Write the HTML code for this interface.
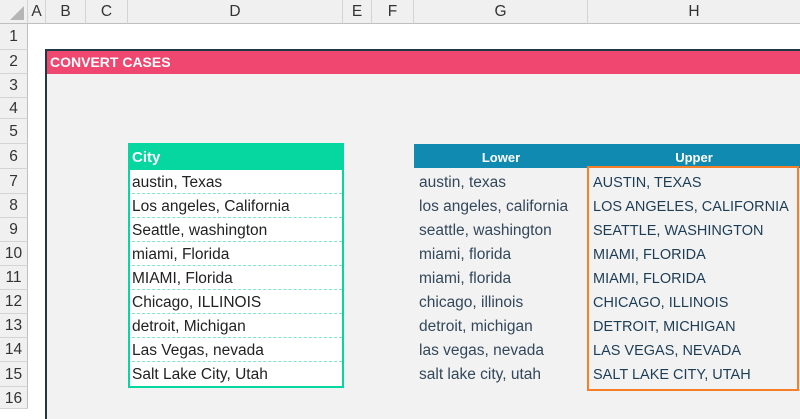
<!DOCTYPE html>
<html><head><style>
*{margin:0;padding:0;box-sizing:border-box}
body{width:800px;height:409px;overflow:hidden;background:#fff;font-family:"Liberation Sans",sans-serif;position:relative}
.a{position:absolute}
.ch{top:0;height:24px;background:#f0f0f0;border-right:1px solid #d4d4d4;border-bottom:1px solid #bfbfbf;color:#333;font-size:15.5px;text-align:center;line-height:24px}
.rh{left:0;width:28px;background:#f0f0f0;border-bottom:1px solid #d4d4d4;border-right:1px solid #bfbfbf;color:#333;font-size:15.5px;text-align:center}
.t{font-size:15.5px;white-space:nowrap;line-height:25px}
.u .t{font-size:14.5px}
</style></head><body>
<div class="a ch" style="left:0;width:28px"><div class="a" style="right:3px;bottom:3px;width:0;height:0;border-left:14px solid transparent;border-bottom:14px solid #b5b5b5"></div></div>
<div class="a ch" style="left:28px;width:18px">A</div>
<div class="a ch" style="left:46px;width:40px">B</div>
<div class="a ch" style="left:86px;width:42px">C</div>
<div class="a ch" style="left:128px;width:215px">D</div>
<div class="a ch" style="left:343px;width:29px">E</div>
<div class="a ch" style="left:372px;width:42px">F</div>
<div class="a ch" style="left:414px;width:174px">G</div>
<div class="a ch" style="left:588px;width:212px;border-right:none">H</div>
<div class="a rh" style="top:24px;height:26px;line-height:26px">1</div>
<div class="a rh" style="top:50px;height:24px;line-height:24px">2</div>
<div class="a rh" style="top:74px;height:24px;line-height:24px">3</div>
<div class="a rh" style="top:98px;height:21px;line-height:21px">4</div>
<div class="a rh" style="top:119px;height:25px;line-height:25px">5</div>
<div class="a rh" style="top:144px;height:25px;line-height:25px">6</div>
<div class="a rh" style="top:169px;height:25px;line-height:25px">7</div>
<div class="a rh" style="top:194px;height:24px;line-height:24px">8</div>
<div class="a rh" style="top:218px;height:24px;line-height:24px">9</div>
<div class="a rh" style="top:242px;height:24px;line-height:24px">10</div>
<div class="a rh" style="top:266px;height:24px;line-height:24px">11</div>
<div class="a rh" style="top:290px;height:24px;line-height:24px">12</div>
<div class="a rh" style="top:314px;height:24px;line-height:24px">13</div>
<div class="a rh" style="top:338px;height:24px;line-height:24px">14</div>
<div class="a rh" style="top:362px;height:25px;line-height:25px">15</div>
<div class="a rh" style="top:387px;height:22px;line-height:24px">16</div>

<div class="a" style="left:45px;top:49px;width:760px;height:370px;background:#f2f2f2;border-left:2px solid #1f3a44;border-top:2px solid #1f3a44"></div>
<div class="a" style="left:47px;top:51px;width:753px;height:23px;background:#ef476f;color:#fff;font-weight:bold;font-size:14px;line-height:23px;padding-left:3px">CONVERT CASES</div>

<div class="a" style="left:128px;top:143px;width:216px;height:245px;border:2px solid #06d6a0;background:#fff"></div>
<div class="a" style="left:128px;top:143px;width:216px;height:27px;background:#06d6a0;color:#fff;font-weight:bold;font-size:15px;line-height:29px;padding-left:4px">City</div>
<div class="a" style="left:132px;top:170px;width:210px;color:#222">
<div class="t" style="border-bottom:1px dashed #7fe3c7;height:24px">austin, Texas</div>
<div class="t" style="border-bottom:1px dashed #7fe3c7;height:24px">Los angeles, California</div>
<div class="t" style="border-bottom:1px dashed #7fe3c7;height:24px">Seattle, washington</div>
<div class="t" style="border-bottom:1px dashed #7fe3c7;height:24px">miami, Florida</div>
<div class="t" style="border-bottom:1px dashed #7fe3c7;height:24px">MIAMI, Florida</div>
<div class="t" style="border-bottom:1px dashed #7fe3c7;height:24px">Chicago, ILLINOIS</div>
<div class="t" style="border-bottom:1px dashed #7fe3c7;height:24px">detroit, Michigan</div>
<div class="t" style="border-bottom:1px dashed #7fe3c7;height:24px">Las Vegas, nevada</div>
<div class="t" style="height:24px">Salt Lake City, Utah</div>
</div>

<div class="a" style="left:414px;top:144px;width:386px;height:24px;background:#118ab2;color:#fff;font-weight:bold;font-size:13px;line-height:27px">
<span class="a" style="left:0;width:174px;text-align:center">Lower</span><span class="a" style="left:174px;width:212px;text-align:center">Upper</span></div>
<div class="a" style="left:587px;top:166px;width:212px;height:225px;border:2px solid #f77f2a"></div>
<div class="a" style="left:419px;top:170px;color:#33475a">
<div class="t" style="height:24px">austin, texas</div><div class="t" style="height:24px">los angeles, california</div><div class="t" style="height:24px">seattle, washington</div><div class="t" style="height:24px">miami, florida</div><div class="t" style="height:24px">miami, florida</div><div class="t" style="height:24px">chicago, illinois</div><div class="t" style="height:24px">detroit, michigan</div><div class="t" style="height:24px">las vegas, nevada</div><div class="t" style="height:24px">salt lake city, utah</div>
</div>
<div class="a u" style="left:593px;top:171px;color:#1d3d55">
<div class="t" style="height:24px">AUSTIN, TEXAS</div><div class="t" style="height:24px">LOS ANGELES, CALIFORNIA</div><div class="t" style="height:24px">SEATTLE, WASHINGTON</div><div class="t" style="height:24px">MIAMI, FLORIDA</div><div class="t" style="height:24px">MIAMI, FLORIDA</div><div class="t" style="height:24px">CHICAGO, ILLINOIS</div><div class="t" style="height:24px">DETROIT, MICHIGAN</div><div class="t" style="height:24px">LAS VEGAS, NEVADA</div><div class="t" style="height:24px">SALT LAKE CITY, UTAH</div>
</div>
</body></html>
